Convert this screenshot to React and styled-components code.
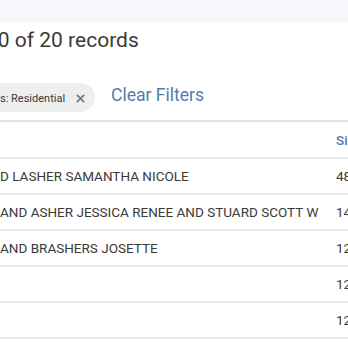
import styled, { createGlobalStyle } from "styled-components";

const GlobalStyle = createGlobalStyle`
  html, body {
    margin: 0;
    padding: 0;
    background: #ffffff;
    overflow: hidden;
  }
  body {
    font-family: Roboto, "Noto Sans", Arial, sans-serif;
    color: #3c3c3c;
  }
`;

const Page = styled.div`
  width: 348px;
  height: 348px;
  overflow: hidden;
`;

const TopBand = styled.div`
  height: 22px;
  background: #f6f7fb;
`;

const RecordCount = styled.div`
  margin: 5px 0 0 -14px;
  font-size: 21px;
  line-height: 26px;
  font-weight: 400;
  color: #3a3a3a;
  white-space: nowrap;
`;

const FilterRow = styled.div`
  display: flex;
  align-items: center;
  gap: 16px;
  margin-top: 30px;
  height: 29px;
`;

const Chip = styled.span`
  display: inline-flex;
  align-items: center;
  gap: 11px;
  height: 29px;
  margin-left: -20px;
  padding: 1px 10px 0 20px;
  box-sizing: border-box;
  border-radius: 15px;
  background: #efefef;
  font-size: 11px;
  color: #3a3a3a;
  white-space: nowrap;
`;

const ChipClose = styled.svg`
  width: 9px;
  height: 9px;
  display: block;
`;

const ClearLink = styled.a`
  font-size: 17.5px;
  color: #4d7fae;
  text-decoration: none;
  white-space: nowrap;
  position: relative;
  top: -3px;
`;

const Table = styled.table`
  margin-top: 8px;
  width: 520px;
  border-collapse: collapse;
  table-layout: fixed;
  border-top: 2px solid #e2e2e2;
`;

const Row = styled.tr`
  height: ${(p) => (p.$head ? 37 : 36)}px;
  border-bottom: 2px solid #ebebeb;
`;

const HeadCell = styled.th`
  padding: 0;
  text-align: left;
  font-size: 13.5px;
  font-weight: 500;
  color: #4d7fae;
  width: ${(p) => p.$w}px;
`;

const Cell = styled.td`
  padding: 0;
  font-size: 13.5px;
  color: #3a3a3a;
  white-space: nowrap;
  overflow: hidden;
  width: ${(p) => p.$w}px;
`;

const rows = [
  { owner: "D LASHER SAMANTHA NICOLE", size: "4800" },
  { owner: "AND ASHER JESSICA RENEE AND STUARD SCOTT W", size: "1400" },
  { owner: "AND BRASHERS JOSETTE", size: "1200" },
  { owner: "", size: "1200" },
  { owner: "", size: "1200" },
];

export default function App() {
  return (
    <Page>
      <GlobalStyle />
      <TopBand />
      <RecordCount>20 of 20 records</RecordCount>
      <FilterRow>
        <Chip>
          s: Residential
          <ChipClose viewBox="0 0 10 10">
            <path d="M1.5 1.5 L8.5 8.5 M8.5 1.5 L1.5 8.5" stroke="#777" strokeWidth="2" strokeLinecap="round" />
          </ChipClose>
        </Chip>
        <ClearLink href="#">Clear Filters</ClearLink>
      </FilterRow>
      <Table>
        <thead>
          <Row $head>
            <HeadCell $w={336}></HeadCell>
            <HeadCell $w={184}>Size</HeadCell>
          </Row>
        </thead>
        <tbody>
          {rows.map((r, i) => (
            <Row key={i}>
              <Cell $w={336}>{r.owner}</Cell>
              <Cell $w={184}>{r.size}</Cell>
            </Row>
          ))}
        </tbody>
      </Table>
    </Page>
  );
}
